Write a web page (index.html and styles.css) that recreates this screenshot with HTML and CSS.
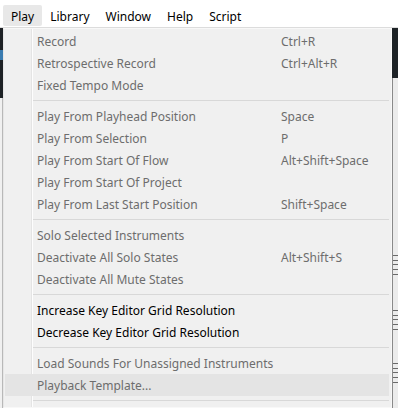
FILE: index.html
```html
<!DOCTYPE html>
<html>
<head>
<meta charset="utf-8">
<link rel="stylesheet" href="styles.css">
</head>
<body>
<div class="menubar">
  <span class="mb-item active">Play</span>
  <span class="mb-item">Library</span>
  <span class="mb-item">Window</span>
  <span class="mb-item">Help</span>
  <span class="mb-item">Script</span>
</div>
<div class="app">
  <div class="left-strip">
    <div class="ls-dark"><div class="ls-blue"></div></div>
    <div class="ls-light"></div>
  </div>
  <div class="canvas"></div>
  <div class="right-strip">
    <div class="rs-dark"></div>
    <div class="rs-light">
      <div class="ticks t1"></div>
      <div class="ticks t2"></div>
      <div class="ticks t3"></div>
    </div>
  </div>
</div>
<div class="dropdown">
  <div class="row dis"><span></span><span>Record</span><span>Ctrl+R</span></div>
  <div class="row dis"><span></span><span>Retrospective Record</span><span>Ctrl+Alt+R</span></div>
  <div class="row dis"><span></span><span>Fixed Tempo Mode</span><span></span></div>
  <div class="sep"></div>
  <div class="row dis"><span></span><span>Play From Playhead Position</span><span>Space</span></div>
  <div class="row dis"><span></span><span>Play From Selection</span><span>P</span></div>
  <div class="row dis"><span></span><span>Play From Start Of Flow</span><span>Alt+Shift+Space</span></div>
  <div class="row dis"><span></span><span>Play From Start Of Project</span><span></span></div>
  <div class="row dis"><span></span><span>Play From Last Start Position</span><span>Shift+Space</span></div>
  <div class="sep"></div>
  <div class="row dis"><span></span><span>Solo Selected Instruments</span><span></span></div>
  <div class="row dis"><span></span><span>Deactivate All Solo States</span><span>Alt+Shift+S</span></div>
  <div class="row dis"><span></span><span>Deactivate All Mute States</span><span></span></div>
  <div class="sep"></div>
  <div class="row"><span></span><span>Increase Key Editor Grid Resolution</span><span></span></div>
  <div class="row"><span></span><span>Decrease Key Editor Grid Resolution</span><span></span></div>
  <div class="sep"></div>
  <div class="row dis"><span></span><span>Load Sounds For Unassigned Instruments</span><span></span></div>
  <div class="row dis hover"><span></span><span>Playback Template...</span><span></span></div>
  <div class="sep"></div>
</div>
</body>
</html>
```

FILE: styles.css
```css
* { box-sizing: border-box; }
html, body { margin: 0; padding: 0; }
body {
  width: 398px;
  height: 408px;
  overflow: hidden;
  background: #ffffff;
  font-family: "Noto Sans", "Open Sans", sans-serif;
  font-size: 12px;
  color: #000;
  position: relative;
}
.menubar {
  display: flex;
  align-items: flex-end;
  height: 28px;
  padding: 5px 0 1px 3px;
  background: #fff;
  border-bottom: 1px solid #dcdcdc;
}
.mb-item {
  display: block;
  height: 21px;
  padding: 2px 8px 0;
  line-height: 19px;
  border-radius: 2px;
}
.mb-item.active { background: #e8e8e8; }

.app {
  display: flex;
  height: 380px;
}
.left-strip {
  width: 3px;
  display: flex;
  flex-direction: column;
}
.ls-dark {
  height: 70px;
  background: #1d2125;
  padding-top: 22px;
}
.ls-blue { height: 10px; background: #3a7bb0; }
.ls-light {
  flex: 1;
  background: #f0f0f0;
  border-right: 1px solid #b8b8b8;
}
.canvas { flex: 1; background: #f0f0f0; }
.right-strip {
  width: 6px;
  display: flex;
  flex-direction: column;
}
.rs-dark { height: 50px; background: #1e2327; }
.rs-light {
  flex: 1;
  background: #ececec;
  border-left: 1px solid #8a8a8a;
  padding-top: 177px;
}
.ticks {
  height: 20px;
  background: repeating-linear-gradient(to bottom, #6a6a6a 0 1px, transparent 1px 4.7px);
}
.t2 { margin-top: 35px; }
.t3 { margin-top: 33px; }

.dropdown {
  position: absolute;
  top: 28px;
  left: 3px;
  width: 389px;
  height: 380px;
  background: #f0f0f0;
  border: 1px solid #f8f8f8;
  border-left-color: #e6e6e6;
  padding: 1px 2px 0 1px;
}
.dropdown::before {
  content: "";
  position: absolute;
  left: 28px;
  top: 0;
  bottom: 0;
  width: 1px;
  background: #fdfdfd;
  box-shadow: -1px 0 0 #e4e4e4;
}
.row {
  position: relative;
  display: grid;
  grid-template-columns: 32px 244px 1fr;
  height: 22px;
  padding-top: 2px;
  line-height: 20px;
  white-space: nowrap;
  color: #000;
}
.row.dis { color: #6d6d6d; }
.row.hover { background: #e4e4e4; }
.sep {
  position: relative;
  height: 1px;
  margin: 4px 0 4px 28px;
  background: #d8d8d8;
}
```
